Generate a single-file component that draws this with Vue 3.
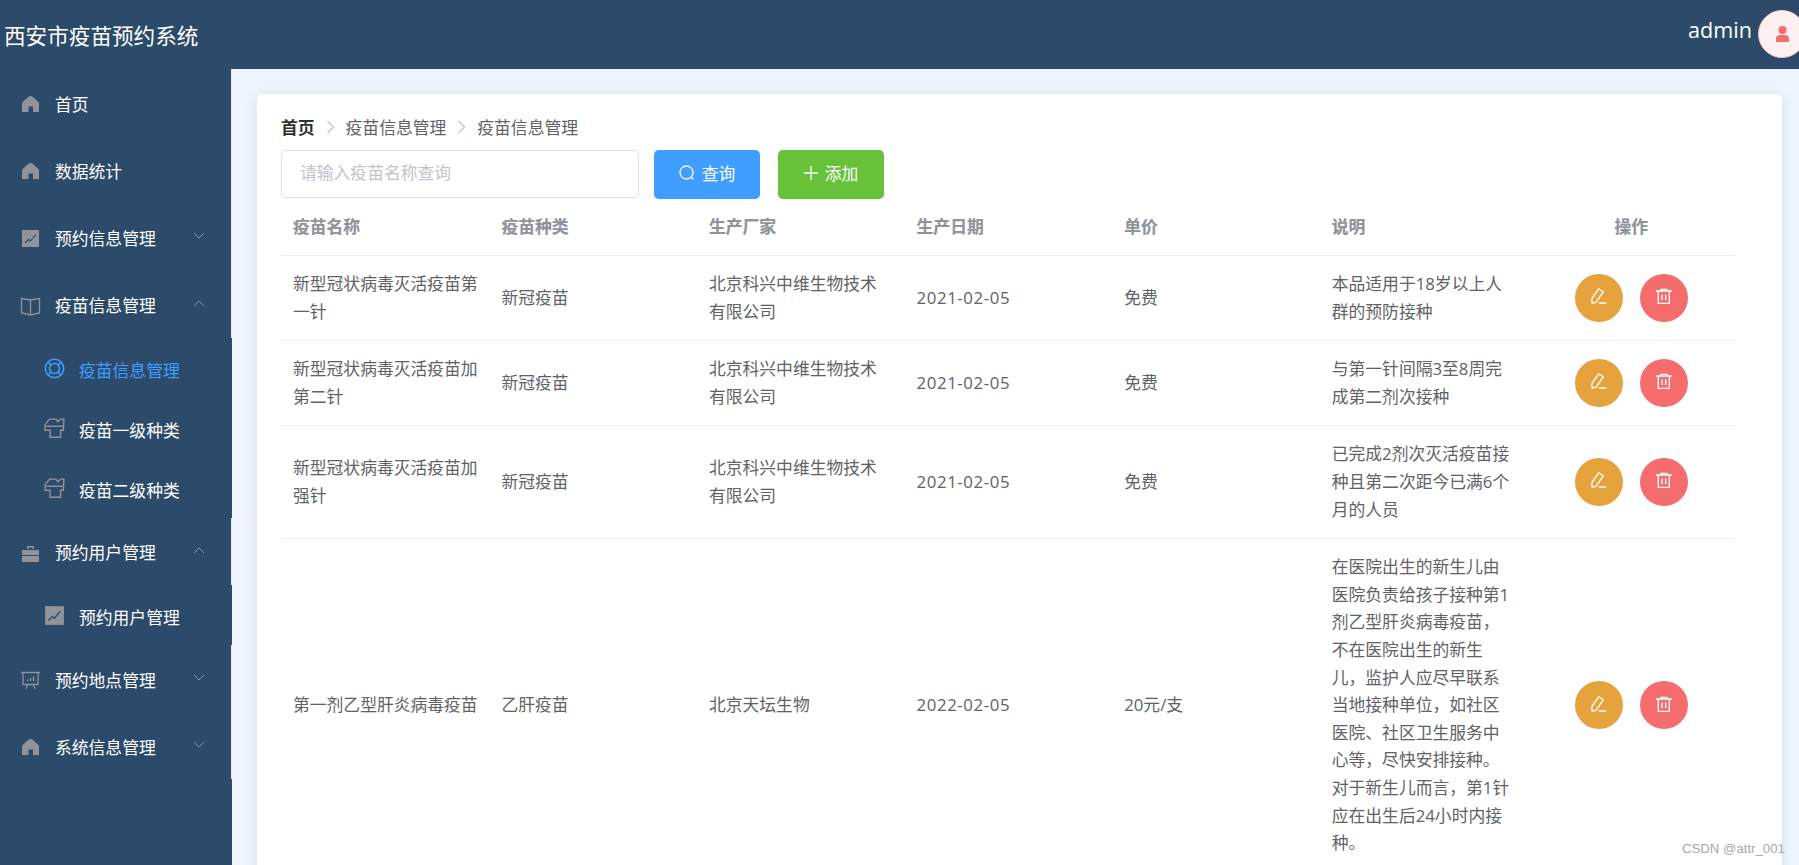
<template>
  <div class="page">
    <header class="topbar">
      <div class="logo">西安市疫苗预约系统</div>
      <div class="user">
        <span class="user-name">admin</span>
        <span class="avatar">
          <svg width="17" height="17" viewBox="0 0 17 17"><circle cx="8.5" cy="5" r="4" fill="#f56c6c"/><path d="M2 17v-3.5c0-2.5 2-3.5 4-3.5h5c2 0 4 1 4 3.5V17z" fill="#f56c6c"/></svg>
        </span>
      </div>
    </header>
    <div class="body-wrap">
      <aside class="aside">
        <ul class="menu">
          <template v-for="item in menu" :key="item.title">
            <li class="menu-item">
              <svg class="menu-icon" width="19" height="19" viewBox="0 0 19 19" v-html="icons[item.icon]"></svg>
              <span>{{ item.title }}</span>
              <svg v-if="item.arrow" class="arrow" width="12" height="7" viewBox="0 0 12 7" fill="none" stroke="#909399" stroke-width="1">
                <path :d="item.arrow === 'up' ? 'M1 6l5-5 5 5' : 'M1 1l5 5 5-5'"/>
              </svg>
            </li>
            <ul v-if="item.children" class="submenu">
              <li v-for="sub in item.children" :key="sub.title" class="sub-item" :class="{ active: sub.active }">
                <svg class="menu-icon sub-icon" width="21" height="21" viewBox="0 0 19 19" v-html="icons[sub.icon]"></svg>
                <span>{{ sub.title }}</span>
              </li>
            </ul>
          </template>
        </ul>
      </aside>
      <main class="main">
        <section class="card">
          <nav class="crumbs">
            <b>首页</b>
            <svg class="crumb-sep" width="9" height="14" viewBox="0 0 9 14" fill="none" stroke="#c0c4cc" stroke-width="1.2"><path d="M1.5 1l6 6-6 6"/></svg>
            <span>疫苗信息管理</span>
            <svg class="crumb-sep" width="9" height="14" viewBox="0 0 9 14" fill="none" stroke="#c0c4cc" stroke-width="1.2"><path d="M1.5 1l6 6-6 6"/></svg>
            <span>疫苗信息管理</span>
          </nav>
          <div class="toolbar">
            <input class="search" type="text" placeholder="请输入疫苗名称查询" />
            <button class="btn btn-blue">
              <svg width="16" height="16" viewBox="0 0 16 16" fill="none" stroke="#fff" stroke-width="1.3"><circle cx="7.5" cy="7.5" r="6.5"/><path d="M12 12l2.5 2.5"/></svg>
              查询
            </button>
            <button class="btn btn-green">
              <svg width="14" height="14" viewBox="0 0 14 14" fill="none" stroke="#fff" stroke-width="1.3"><path d="M7 0v14M0 7h14"/></svg>
              添加
            </button>
          </div>
          <table class="grid">
            <thead>
              <tr>
                <th v-for="col in columns" :key="col">{{ col }}</th>
                <th class="center">操作</th>
              </tr>
            </thead>
            <tbody>
              <tr v-for="row in rows" :key="row.name">
                <td class="first">{{ row.name }}</td>
                <td>{{ row.kind }}</td>
                <td>{{ row.maker }}</td>
                <td class="date">{{ row.date }}</td>
                <td>{{ row.price }}</td>
                <td>{{ row.desc }}</td>
                <td class="center">
                  <div class="ops">
                    <button class="round orange">
                      <svg width="16" height="16" viewBox="0 0 16 16" fill="none" stroke="#fff" stroke-width="1.3"><path d="M7.8.8l4.4 3-7 10.4-4 1-.4-4.700zM7.800 15h7.400"/></svg>
                    </button>
                    <button class="round red">
                      <svg width="16" height="16" viewBox="0 0 16 16" fill="none" stroke="#fff" stroke-width="1.3"><path d="M0 3h16M5 3V1.300h6V3M2.300 3v12.300h11V3M6 6.500v5.500M9.700 6.500v5.500"/></svg>
                    </button>
                  </div>
                </td>
              </tr>
            </tbody>
          </table>
        </section>
      </main>
    </div>
    <div class="watermark">CSDN @attr_001</div>
  </div>
</template>

<script setup>
const icons = {
  home: '<path fill="#909399" d="M9.5 1Q11 1 13 3L17 6.5Q18 7.500 18 9V17H12V11.500H7.500V17H1V9Q1 7.500 2 6.500L6 3Q8 1 9.500 1Z"/>',
  chart: '<rect x="1" y="1" width="17" height="17" fill="#909399"/><path d="M4 14l3.5-3.500 2 1.500 4-5 1.500-1" fill="none" stroke="#2c4a6a" stroke-width="1.2"/>',
  book: '<path d="M.5 1.500L9.500 3L18.500 1.500V16L9.500 18L.5 16ZM9.500 3V18" fill="none" stroke="#909399" stroke-width="1.300"/>',
  help: '<circle cx="9.5" cy="9.5" r="8.300" fill="none" stroke="#409eff" stroke-width="1.400"/><circle cx="9.5" cy="9.5" r="4.500" fill="none" stroke="#409eff" stroke-width="1.400"/><path d="M4 4l2.500 2.500M15 4l-2.500 2.500M4 15l2.500-2.500M15 15l-2.500-2.500" stroke="#409eff" stroke-width="1.300"/>',
  printer: '<path d="M5 1h6l1.500 2.500L15 1h3l-.5 10H15v6.500H5.500V11H1V6z" fill="none" stroke="#909399" stroke-width="1.300"/><path d="M2 7.500h15" stroke="#909399" stroke-width="1.300"/>',
  case: '<path fill="#909399" d="M1 6h17v5H1zM1 12h17v6H1zM6 5V2h7v3h-1.500V3.500h-4V5z"/>',
  board: '<path d="M0 1.500h19M2 2v11.500h15V2M6.500 14l-1.500 4M12.500 14l1.500 4" fill="none" stroke="#909399" stroke-width="1.300"/><path d="M6.500 10v-1.500M9.500 10V7M12.500 10V5.500" fill="none" stroke="#909399" stroke-width="1.500"/>'
};

const menu = [
  { title: '首页', icon: 'home' },
  { title: '数据统计', icon: 'home' },
  { title: '预约信息管理', icon: 'chart', arrow: 'down' },
  {
    title: '疫苗信息管理', icon: 'book', arrow: 'up',
    children: [
      { title: '疫苗信息管理', icon: 'help', active: true },
      { title: '疫苗一级种类', icon: 'printer' },
      { title: '疫苗二级种类', icon: 'printer' }
    ]
  },
  {
    title: '预约用户管理', icon: 'case', arrow: 'up',
    children: [{ title: '预约用户管理', icon: 'chart' }]
  },
  { title: '预约地点管理', icon: 'board', arrow: 'down' },
  { title: '系统信息管理', icon: 'home', arrow: 'down' }
];

const columns = ['疫苗名称', '疫苗种类', '生产厂家', '生产日期', '单价', '说明'];

const rows = [
  {
    name: '新型冠状病毒灭活疫苗第一针', kind: '新冠疫苗', maker: '北京科兴中维生物技术有限公司',
    date: '2021-02-05', price: '免费', desc: '本品适用于18岁以上人群的预防接种'
  },
  {
    name: '新型冠状病毒灭活疫苗加第二针', kind: '新冠疫苗', maker: '北京科兴中维生物技术有限公司',
    date: '2021-02-05', price: '免费', desc: '与第一针间隔3至8周完成第二剂次接种'
  },
  {
    name: '新型冠状病毒灭活疫苗加强针', kind: '新冠疫苗', maker: '北京科兴中维生物技术有限公司',
    date: '2021-02-05', price: '免费', desc: '已完成2剂次灭活疫苗接种且第二次距今已满6个月的人员'
  },
  {
    name: '第一剂乙型肝炎病毒疫苗', kind: '乙肝疫苗', maker: '北京天坛生物',
    date: '2022-02-05', price: '20元/支',
    desc: '在医院出生的新生儿由医院负责给孩子接种第1剂乙型肝炎病毒疫苗，不在医院出生的新生儿，监护人应尽早联系当地接种单位，如社区医院、社区卫生服务中心等，尽快安排接种。对于新生儿而言，第1针应在出生后24小时内接种。'
  }
];
</script>

<style>
html, body {
  margin: 0;
  height: 100%;
  overflow: hidden;
}
</style>

<style scoped>
.page {
  position: relative;
  width: 100vw;
  height: 100vh;
  overflow: hidden;
  display: flex;
  flex-direction: column;
  font-family: "Open Sans", "Noto Sans CJK SC", sans-serif;
  font-size: 16.8px;
  color: #606266;
  background: #eef5fe;
}

.topbar {
  flex: none;
  height: 69px;
  display: flex;
  justify-content: space-between;
  align-items: center;
  background: #2c4a6a;
  color: #fff;
}
.logo {
  margin-left: 4px;
  font-size: 21.6px;
}
.user {
  display: flex;
  align-items: center;
  gap: 6px;
  margin-right: -7px;
  margin-top: -2px;
}
.user-name {
  font-size: 21.6px;
  margin-top: -8px;
}
.avatar {
  width: 48px;
  height: 48px;
  box-sizing: border-box;
  border-radius: 50%;
  border: 1px solid #fbc4c4;
  background: #fef0f0;
  display: flex;
  align-items: center;
  justify-content: center;
}

.body-wrap {
  flex: 1;
  display: flex;
  min-height: 0;
}

.aside {
  flex: none;
  width: 232px;
  background: #2c4a6a;
}
.menu {
  margin: 0;
  padding: 0;
  list-style: none;
  border-right: 1px solid #e6e6e6;
  color: #fff;
}
.menu-item {
  position: relative;
  box-sizing: border-box;
  height: 67.2px;
  padding: 2px 0 0 21px;
  display: flex;
  align-items: center;
  gap: 15px;
  list-style: none;
}
.menu-item .menu-icon {
  margin-top: 2px;
}
.arrow {
  position: absolute;
  right: 26px;
  top: 29px;
}
.submenu {
  margin: 0 -1px 0 0;
  padding: 0;
  list-style: none;
  background: #2c4a6a;
}
.sub-item {
  box-sizing: border-box;
  height: 60px;
  padding: 4px 0 0 44px;
  display: flex;
  align-items: center;
  gap: 14px;
  list-style: none;
}
.sub-item.active {
  color: #409eff;
}
.menu-icon {
  flex: none;
  overflow: visible;
}
.sub-icon {
  margin-top: -2px;
}

.main {
  flex: 1;
  min-width: 0;
  padding: 25px 17px 0 25px;
}
.card {
  box-sizing: border-box;
  height: 1000px;
  padding: 17px 47px 0 24px;
  background: #fff;
  border-radius: 4.8px;
  box-shadow: 0 2px 14px rgba(0, 0, 0, 0.1);
}
.crumbs {
  height: 32px;
  display: flex;
  align-items: center;
  gap: 11px;
  margin-bottom: 7px;
}
.crumbs b {
  color: #303133;
}
.crumb-sep {
  flex: none;
}
.toolbar {
  display: flex;
  align-items: flex-start;
  gap: 15px;
}
.toolbar .btn-green {
  margin-left: 3px;
}
.search {
  box-sizing: border-box;
  width: 358px;
  height: 48px;
  padding: 0 18px 3px;
  border: 1px solid #dcdfe6;
  border-radius: 4.8px;
  outline: none;
  font: inherit;
  color: #606266;
}
.search::placeholder {
  color: #c0c4cc;
}
.btn {
  width: 106px;
  height: 49px;
  padding: 0 0 4px;
  border: 0;
  border-radius: 4.8px;
  color: #fff;
  font: inherit;
  display: flex;
  align-items: center;
  justify-content: center;
  gap: 7px;
}
.btn-blue {
  background: #409eff;
}
.btn-green {
  background: #67c23a;
}

.grid {
  width: 1454px;
  table-layout: fixed;
  border-collapse: separate;
  border-spacing: 0;
  line-height: 27.6px;
}
.grid th,
.grid td {
  padding: 14.5px 12px;
  border-bottom: 1px solid #ebeef5;
  text-align: left;
  vertical-align: middle;
}
.grid th {
  padding: 14px 12px;
  color: #909399;
  font-weight: 700;
  -webkit-text-stroke: 0.2px #909399;
}
.grid th:first-child {
  width: 184.4px;
}
.grid .first {
  padding-right: 8px;
}
.grid .date {
  letter-spacing: 0.6px;
}
.grid .center {
  text-align: center;
}
.ops {
  display: flex;
  justify-content: center;
  gap: 17px;
}
.round {
  width: 48px;
  height: 48px;
  padding: 0 0 3px;
  border: 0;
  border-radius: 50%;
  display: flex;
  align-items: center;
  justify-content: center;
}
.orange {
  background: #e6a23c;
}
.red {
  background: #f56c6c;
}

.watermark {
  position: absolute;
  left: 1682px;
  top: 841px;
  font-family: "Liberation Sans", sans-serif;
  font-size: 13.2px;
  color: #a8a8a8;
  white-space: nowrap;
}
</style>
